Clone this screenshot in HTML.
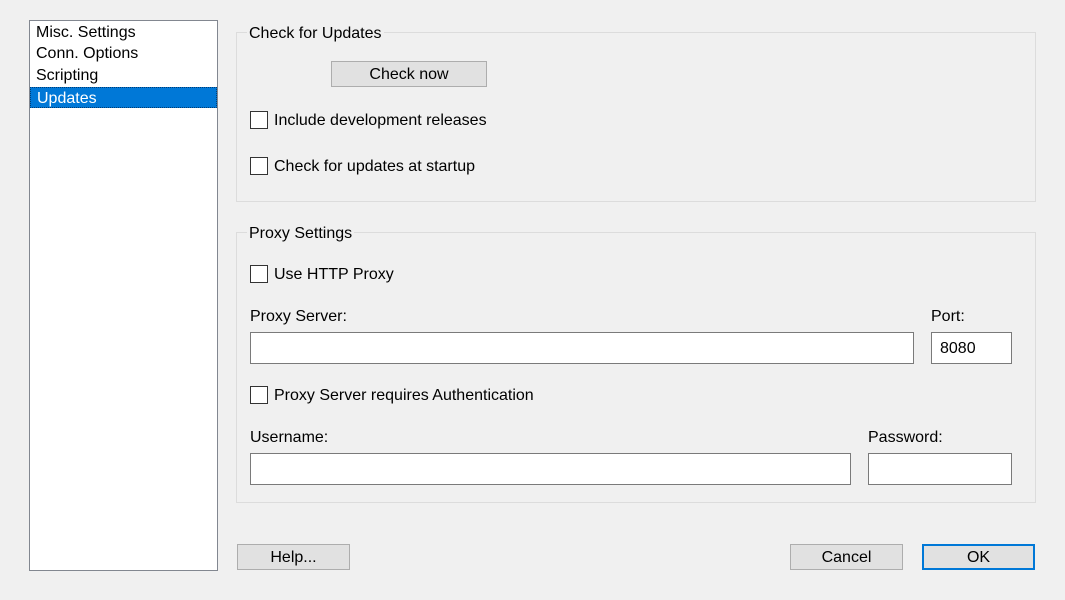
<!DOCTYPE html>
<html><head><style>
body{margin:0;width:1065px;height:600px;background:#f0f0f0;font-family:"Liberation Sans",sans-serif;font-size:16px;color:#000;position:relative;overflow:hidden}
.a{position:absolute}
.list{left:29px;top:20px;width:187px;height:549px;background:#fff;border:1px solid #828790}
.list div{position:absolute;left:0;width:187px;height:21px;line-height:22px;padding-left:6px;box-sizing:border-box}
.grp{border:1px solid #dcdcdc;box-sizing:border-box}
.leg{background:#f0f0f0;padding:0 2px;line-height:22px}
.btn{background:#e1e1e1;border:1px solid #adadad;box-sizing:border-box;text-align:center}
.cb{width:18px;height:18px;border:1px solid #333;background:#fff;box-sizing:border-box}
.in{background:#fff;border:1px solid #7a7a7a;box-sizing:border-box}
.t{line-height:22px;white-space:nowrap}
</style></head><body>
<div class="a list">
<div style="top:1px">Misc. Settings</div>
<div style="top:22px">Conn. Options</div>
<div style="top:44px">Scripting</div>
<div style="top:66px;background:#0078d7;color:#fff;border:1px dotted #003c74">Updates</div>
</div>

<div class="a grp" style="left:236px;top:32px;width:800px;height:170px"></div>
<div class="a leg" style="left:247px;top:23px">Check for Updates</div>
<div class="a btn" style="left:331px;top:61px;width:156px;height:26px;line-height:26px">Check now</div>
<div class="a cb" style="left:250px;top:111px"></div>
<div class="a t" style="left:274px;top:110px">Include development releases</div>
<div class="a cb" style="left:250px;top:157px"></div>
<div class="a t" style="left:274px;top:156px">Check for updates at startup</div>

<div class="a grp" style="left:236px;top:232px;width:800px;height:271px"></div>
<div class="a leg" style="left:247px;top:223px">Proxy Settings</div>
<div class="a cb" style="left:250px;top:265px"></div>
<div class="a t" style="left:274px;top:264px">Use HTTP Proxy</div>
<div class="a t" style="left:250px;top:306px">Proxy Server:</div>
<div class="a in" style="left:250px;top:332px;width:664px;height:32px"></div>
<div class="a t" style="left:931px;top:306px">Port:</div>
<div class="a in t" style="left:931px;top:332px;width:81px;height:32px;line-height:31px;padding-left:8px">8080</div>
<div class="a cb" style="left:250px;top:386px"></div>
<div class="a t" style="left:274px;top:385px">Proxy Server requires Authentication</div>
<div class="a t" style="left:250px;top:427px">Username:</div>
<div class="a in" style="left:250px;top:453px;width:601px;height:32px"></div>
<div class="a t" style="left:868px;top:427px">Password:</div>
<div class="a in" style="left:868px;top:453px;width:144px;height:32px"></div>

<div class="a btn" style="left:237px;top:544px;width:113px;height:26px;line-height:26px">Help...</div>
<div class="a btn" style="left:790px;top:544px;width:113px;height:26px;line-height:26px">Cancel</div>
<div class="a btn" style="left:922px;top:544px;width:113px;height:26px;line-height:24px;border:2px solid #0078d7">OK</div>
</body></html>
